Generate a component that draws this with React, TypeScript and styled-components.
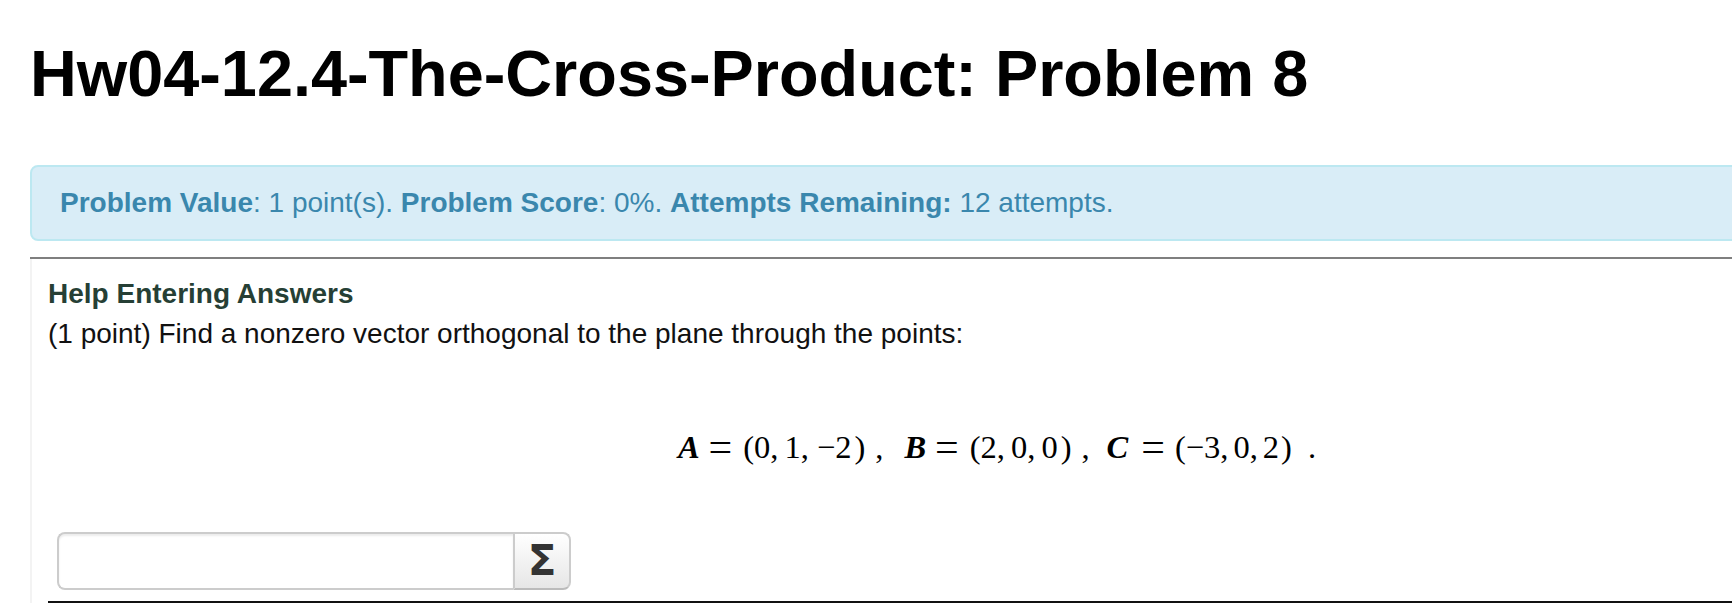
import React from "react";
import styled, { createGlobalStyle } from "styled-components";

const Global = createGlobalStyle`
  html, body { margin: 0; padding: 0; background: #fff; }
  body { overflow: hidden; font-family: "Liberation Sans", Arial, Helvetica, sans-serif; color: #111; }
`;

const Page = styled.div`
  width: 1926px;
  padding-left: 30px;
  box-sizing: content-box;
`;

const Title = styled.h1`
  margin: 34px 0 51px 0;
  font-size: 64.8px;
  line-height: 80px;
  font-weight: bold;
  color: #000;
`;

const InfoBox = styled.div`
  background: #d9edf7;
  border: 2px solid #bce8f1;
  border-radius: 8px;
  padding: 16px 28px;
  font-size: 28px;
  line-height: 40px;
  color: #3a87ad;
`;

const Label = styled.strong`
  font-weight: bold;
`;

const Rule = styled.div`
  margin-top: 16px;
  height: 2px;
  background: #7f7f7f;
`;

const ProblemBody = styled.div`
  border-left: 2px solid #f3f3f3;
  padding: 15px 10px 0 16px;
  font-size: 28px;
  line-height: 40px;
  color: #111;
`;

const HelpLink = styled.div`
  font-weight: bold;
  color: #263f35;
`;

const Statement = styled.div``;

const MathLine = styled.div`
  margin-top: 73px;
  text-align: center;
  font-family: "Liberation Serif", "Times New Roman", serif;
  font-size: 32.5px;
  line-height: 40px;
  white-space: nowrap;
  color: #000;
`;

const Var = styled.span`
  font-style: italic;
  font-weight: bold;
`;

const Eq = styled.span`
  font-size: 42px;
  line-height: 0;
  vertical-align: -3px;
`;

const Sp = styled.span<{ $w: number }>`
  display: inline-block;
  width: ${(p) => p.$w}px;
`;

const AnswerRow = styled.div`
  margin-top: 65px;
  padding-left: 9px;
  display: flex;
`;

const AnswerInput = styled.input`
  box-sizing: border-box;
  width: 456px;
  height: 58px;
  border: 2px solid #ccc;
  border-right: none;
  border-radius: 8px 0 0 8px;
  box-shadow: inset 0 2px 2px rgba(0, 0, 0, 0.075);
  background: #fff;
  font-size: 28px;
  padding: 8px 12px;
  outline: none;
`;

const Addon = styled.button`
  box-sizing: border-box;
  width: 58px;
  height: 58px;
  border: 2px solid #ccc;
  border-bottom-color: #bbb;
  border-radius: 0 8px 8px 0;
  background: linear-gradient(#ffffff, #e6e6e6);
  display: flex;
  align-items: center;
  justify-content: center;
  padding: 0;
  font-family: "DejaVu Sans", sans-serif;
  font-weight: bold;
  font-size: 42px;
  line-height: 1;
  color: #333;
`;

const BottomRule = styled.div`
  margin-top: 11px;
  height: 2px;
  background: #111;
`;

type Tok = { v?: string; eq?: boolean; t?: string; g?: number };

const tokens: Tok[] = [
  { v: "A" }, { g: 9 }, { eq: true }, { g: 11 },
  { t: "(0," }, { g: 6 }, { t: "1," }, { g: 8 }, { t: "−2" }, { g: 3 }, { t: ")" }, { g: 10 }, { t: "," }, { g: 21 },
  { v: "B" }, { g: 9 }, { eq: true }, { g: 11 },
  { t: "(2," }, { g: 6 }, { t: "0," }, { g: 6 }, { t: "0" }, { g: 3 }, { t: ")" }, { g: 10 }, { t: "," }, { g: 17 },
  { v: "C" }, { g: 13 }, { eq: true }, { g: 10 },
  { t: "(−3," }, { g: 5 }, { t: "0," }, { g: 5 }, { t: "2" }, { g: 2 }, { t: ")" }, { g: 16 }, { t: "." },
];

function MathExpr() {
  return (
    <MathLine>
      {tokens.map((k, i) => {
        if (k.v) return <Var key={i}>{k.v}</Var>;
        if (k.eq) return <Eq key={i}>=</Eq>;
        if (k.g !== undefined) return <Sp key={i} $w={k.g} />;
        return <React.Fragment key={i}>{k.t}</React.Fragment>;
      })}
    </MathLine>
  );
}

export default function App() {
  return (
    <>
      <Global />
      <Page>
        <Title>Hw04-12.4-The-Cross-Product: Problem 8</Title>
        <InfoBox>
          <Label>Problem Value</Label>: 1 point(s). <Label>Problem Score</Label>: 0%.{" "}
          <Label>Attempts Remaining:</Label> 12 attempts.
        </InfoBox>
        <Rule />
        <ProblemBody>
          <HelpLink>Help Entering Answers</HelpLink>
          <Statement>(1 point) Find a nonzero vector orthogonal to the plane through the points:</Statement>
          <MathExpr />
          <AnswerRow>
            <AnswerInput type="text" aria-label="answer" />
            <Addon type="button">Σ</Addon>
          </AnswerRow>
          <BottomRule />
        </ProblemBody>
      </Page>
    </>
  );
}
